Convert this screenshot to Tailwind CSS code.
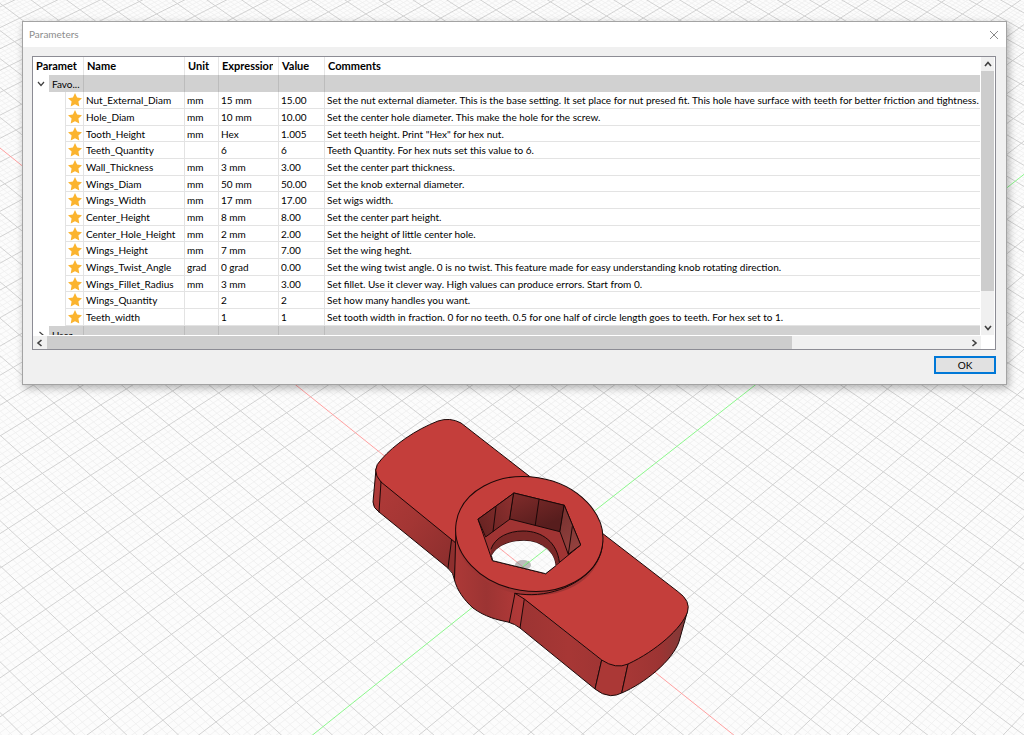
<!DOCTYPE html>
<html lang="en">
<head>
  <meta charset="UTF-8" />
  <meta name="viewport" content="width=device-width, initial-scale=1" />
  <title>Parameters</title>
  <script src="https://cdn.jsdelivr.net/npm/@tailwindcss/browser@4"></script>
</head>
<body class="bg-[#fcfcfc] font-['Lato','Noto_Sans',sans-serif] text-[10px] text-black">
  <main class="relative min-h-screen overflow-hidden">

    <!-- 3D viewport -->
    <svg class="absolute inset-0 h-full w-full" viewBox="0 0 1024 735" preserveAspectRatio="xMidYMid slice" aria-hidden="true">
      <defs>
        <linearGradient id="sideLeft" x1="373" y1="490" x2="456" y2="550" gradientUnits="userSpaceOnUse">
          <stop offset="0" stop-color="#b03a38" />
          <stop offset="0.5" stop-color="#a33634" />
          <stop offset="1" stop-color="#8e2f2e" />
        </linearGradient>
        <linearGradient id="sideRing" x1="455" y1="0" x2="518" y2="0" gradientUnits="userSpaceOnUse">
          <stop offset="0" stop-color="#ac3937" />
          <stop offset="0.5" stop-color="#9c3433" />
          <stop offset="1" stop-color="#b03938" />
        </linearGradient>
        <linearGradient id="sideRight" x1="520" y1="0" x2="601" y2="0" gradientUnits="userSpaceOnUse">
          <stop offset="0" stop-color="#9c3433" />
          <stop offset="0.6" stop-color="#a73735" />
          <stop offset="1" stop-color="#a03534" />
        </linearGradient>
        <linearGradient id="sideEnd" x1="622" y1="0" x2="687" y2="0" gradientUnits="userSpaceOnUse">
          <stop offset="0" stop-color="#a83836" />
          <stop offset="0.6" stop-color="#9c3433" />
          <stop offset="1" stop-color="#7d3b39" />
        </linearGradient>
        <linearGradient id="wallBack" x1="520" y1="495" x2="535" y2="530" gradientUnits="userSpaceOnUse">
          <stop offset="0" stop-color="#7c2a29" />
          <stop offset="1" stop-color="#571d1d" />
        </linearGradient>
        <linearGradient id="wallLeft" x1="480" y1="520" x2="513" y2="505" gradientUnits="userSpaceOnUse">
          <stop offset="0" stop-color="#6b2423" />
          <stop offset="1" stop-color="#8b2f2e" />
        </linearGradient>
        <linearGradient id="wallRight" x1="562" y1="520" x2="579" y2="545" gradientUnits="userSpaceOnUse">
          <stop offset="0" stop-color="#7d3533" />
          <stop offset="1" stop-color="#93403d" />
        </linearGradient>
        <mask id="bore" maskUnits="userSpaceOnUse" x="0" y="0" width="1024" height="735">
          <rect width="1024" height="735" fill="white" />
          <path fill="black" d="M492.700 560.700 L491.500 556 C496 546 509 540.700 524 540.700 C542 541 555 552 555.500 566 L545.700 573.700 Z" />
        </mask>
      </defs>

      <g fill="none">
        <path id="gridMinor" stroke="#efefef" stroke-width="0.8" />
        <path id="gridMajor" stroke="#d2d2d2" stroke-width="1" />
        <path d="M-20 132 L523 567 L745 744" stroke="#ffa0a0" />
        <path d="M1064 143 L523 567 L290 753" stroke="#8cf78c" />
      </g>
      <ellipse cx="523" cy="565" rx="8" ry="5" fill="#888888" fill-opacity="0.55" />
      <path d="M523 566 L529 561" stroke="#8cf78c" />

      <g mask="url(#bore)" stroke="#1c0808" stroke-width="1" stroke-linejoin="round" stroke-linecap="round">
        <!-- left wing -->
        <path fill="url(#sideLeft)" d="M376 469 L373 502 Q373 508 379 512 L447.500 567.700 Q454 573 454.500 580 L470 580 L470 500 Z" />
        <path fill="#c43e3b" d="M530 476.700 L461 423 Q450 417 438 421 C415 430 394 445 381.700 459 Q370 470 381 482 L451 539 Q456 542 457 546 L500 560 Z" />
        <path fill="none" d="M381 482 L379 512 M451.500 540 L448 568 M457 546 L454.500 577" />

        <!-- hub side and right wing -->
        <path fill="url(#sideRing)" d="M456 528 L454.500 580 C457 590 464 600 473 608 C485 617 498 620 508 622 Q515 624 520 628 L560 600 L602 540 Z" />
        <path fill="url(#sideRight)" d="M524.300 599 L520 628 L595 689 L601.700 660 Z" />
        <path fill="#ab3836" d="M601.700 660 L595 689 Q602 695 610.700 695.700 Q617 695.500 621.700 693 L628 664 Z" />
        <path fill="url(#sideEnd)" d="M628 664 L621.700 693 C645 683 672 661 679 641.700 L687 613 Z" />
        <path fill="#c43e3b" d="M602 533 L678 591.700 Q691 601 687.500 612 C682 628 656 651 628 664 Q616 669.500 601.700 660 L524.300 599 L515 593.300 Z" />
        <path fill="none" d="M515 593.300 L509.300 622.500" />

        <!-- hub top with hexagonal pocket -->
        <ellipse cx="529.300" cy="538" rx="73.600" ry="57" transform="rotate(9 529.300 538)" fill="#a03534" stroke="none" />
        <path fill="none" d="M515 593.300 C545 599 578 587 594 566 Q603 554 602.700 541" />
        <ellipse cx="529.300" cy="534" rx="74" ry="57" transform="rotate(9 529.300 534)" fill="#c43e3b" />
        <path fill="#a03433" d="M478.300 519 L514 493 L564.300 505.300 L580.700 545 L545.700 573.700 L492.700 560.700 Z" />
        <path fill="#7a2827" stroke="none" d="M491 557 C488 542 506 531 523 531 C543 531 557 543 559.300 561.700 L545.700 573.700 L492.700 560.700 Z" />
        <path fill="none" d="M491 549 C495 537 509 531 523 531 C543 531 557 543 559.300 561.700" />
        <path fill="none" d="M491.500 556 C496 546 509 540.700 524 540.700 C542 541 555 552 555.500 566" />
        <path fill="url(#wallLeft)" d="M478.300 519 L514 493 L510 519 L486 536.700 Z" />
        <path fill="url(#wallBack)" d="M514 493 L564.300 505.300 L560 531.700 L510 519 Z" />
        <path fill="url(#wallRight)" d="M564.300 505.300 L580.700 545 L568.300 554.300 L560 531.700 Z" />
        <path fill="none" d="M496 507 L493 531.500 M539 499.700 L535.300 525 M572.300 526.700 L568.300 554.300" />
      </g>
      <path fill="none" stroke="#1c0808" d="M491.500 556 L492.700 560.700 L545.700 573.700 L555.500 566" />
    </svg>

    <!-- Dialog -->
    <section class="relative mt-[21px] mr-[17px] ml-[22px] border border-[#a3a3a3] bg-[#f0f0f0] shadow-[2px_3px_8px_rgba(0,0,0,0.3)]" role="dialog" aria-labelledby="dialogTitle">
      <header class="flex h-[25px] items-center justify-between bg-white pr-1 pl-[6px]">
        <h1 id="dialogTitle" class="text-[#8c8c8c]">Parameters</h1>
        <button class="flex h-4 w-4 items-center justify-center" aria-label="Close">
          <svg class="h-[10px] w-[10px]" viewBox="0 0 10 10" fill="none" stroke="#8a8a8a"><path d="M1 1 L9 9 M9 1 L1 9" /></svg>
        </button>
      </header>

      <div class="mt-[9px] mr-[10px] ml-[9px] border border-[#8c8c94] bg-white pr-px">
        <div class="flex">
          <div class="h-[278px] min-w-0 flex-1 overflow-hidden">
            <table class="w-full table-fixed border-separate border-spacing-0 leading-[14px] whitespace-nowrap">
              <colgroup>
                <col class="w-4" />
                <col class="w-[17px]" />
                <col class="w-[18px]" />
                <col class="w-[101px]" />
                <col class="w-[34px]" />
                <col class="w-[60px]" />
                <col class="w-[46px]" />
                <col />
              </colgroup>
              <thead>
                <tr class="h-[18px] text-left text-[11px]">
                  <th colspan="3" class="overflow-hidden border-r border-[#e5e5e5] p-0 pl-[3px]"><div class="w-[41px] overflow-hidden">Parameter</div></th>
                  <th class="border-r border-[#e5e5e5] p-0 pl-[3px]">Name</th>
                  <th class="border-r border-[#e5e5e5] p-0 pl-[3px]">Unit</th>
                  <th class="overflow-hidden border-r border-[#e5e5e5] p-0 pl-[3px]"><div class="w-[51px] overflow-hidden">Expression</div></th>
                  <th class="border-r border-[#e5e5e5] p-0 pl-[3px]">Value</th>
                  <th class="p-0 pl-[3px]">Comments</th>
                </tr>
              </thead>
              <tbody id="rows"></tbody>
            </table>
          </div>

          <div class="ml-px flex w-[13px] flex-col bg-[#f0f0f0]">
            <button class="flex h-[14px] items-center justify-center" aria-label="Scroll up">
              <svg class="h-2 w-2" viewBox="0 0 8 8" fill="none" stroke="#404040" stroke-width="1.6"><path d="M1 6 L4 2.500 L7 6" /></svg>
            </button>
            <div class="flex-1"><div class="h-[88%] bg-[#cdcdcd]"></div></div>
            <button class="flex h-[14px] items-center justify-center" aria-label="Scroll down">
              <svg class="h-2 w-2" viewBox="0 0 8 8" fill="none" stroke="#404040" stroke-width="1.6"><path d="M1 2 L4 5.500 L7 2" /></svg>
            </button>
          </div>
        </div>

        <div class="mt-px mr-[13px] flex h-[13px] bg-[#f0f0f0]">
          <button class="flex w-[14px] items-center justify-center" aria-label="Scroll left">
            <svg class="h-2 w-2" viewBox="0 0 8 8" fill="none" stroke="#404040" stroke-width="1.6"><path d="M5.500 1 L2 4 L5.500 7" /></svg>
          </button>
          <div class="flex-1"><div class="h-full w-[81%] bg-[#cdcdcd]"></div></div>
          <button class="flex w-[14px] items-center justify-center" aria-label="Scroll right">
            <svg class="h-2 w-2" viewBox="0 0 8 8" fill="none" stroke="#404040" stroke-width="1.6"><path d="M2.500 1 L6 4 L2.500 7" /></svg>
          </button>
        </div>
      </div>

      <footer class="flex justify-end pt-[6px] pr-[10px] pb-[10px] pl-[9px]">
        <button class="h-[18px] w-[62px] border-2 border-[#0078d7] bg-[#e1e1e1] leading-[14px]">OK</button>
      </footer>
    </section>
  </main>

  <script>
    const parameters = [
      ["Nut_External_Diam", "mm", "15 mm", "15.00", "Set the nut external diameter. This is the base setting. It set place for nut presed fit. This hole have surface with teeth for better friction and tightness."],
      ["Hole_Diam", "mm", "10 mm", "10.00", "Set the center hole diameter. This make the hole for the screw."],
      ["Tooth_Height", "mm", "Hex", "1.005", "Set teeth height. Print \"Hex\" for hex nut."],
      ["Teeth_Quantity", "", "6", "6", "Teeth Quantity. For hex nuts set this value to 6."],
      ["Wall_Thickness", "mm", "3 mm", "3.00", "Set the center part thickness."],
      ["Wings_Diam", "mm", "50 mm", "50.00", "Set the knob external diameter."],
      ["Wings_Width", "mm", "17 mm", "17.00", "Set wigs width."],
      ["Center_Height", "mm", "8 mm", "8.00", "Set the center part height."],
      ["Center_Hole_Height", "mm", "2 mm", "2.00", "Set the height of little center hole."],
      ["Wings_Height", "mm", "7 mm", "7.00", "Set the wing heght."],
      ["Wings_Twist_Angle", "grad", "0 grad", "0.00", "Set the wing twist angle. 0 is no twist. This feature made for easy understanding knob rotating direction."],
      ["Wings_Fillet_Radius", "mm", "3 mm", "3.00", "Set fillet. Use it clever way. High values can produce errors. Start from 0."],
      ["Wings_Quantity", "", "2", "2", "Set how many handles you want."],
      ["Teeth_width", "", "1", "1", "Set tooth width in fraction. 0 for no teeth. 0.5 for one half of circle length goes to teeth. For hex set to 1."],
    ];

    const star = `<svg class="mx-auto block h-[14px] w-[14px]" viewBox="0 0 14 14" fill="#fbb42e"><path d="M7 0 L9.100 4.600 L14 5.200 L10.400 8.600 L11.300 13.600 L7 11.200 L2.700 13.600 L3.600 8.600 L0 5.200 L4.900 4.600 Z" /></svg>`;

    function groupRow(label, chevron) {
      const cell = `<td class="border-r border-[#bcbcbc] bg-[#d1d1d1] p-0"></td>`;
      return `<tr class="h-[17px]">
        <td class="p-0"><svg class="mx-auto block h-2 w-2" viewBox="0 0 8 8" fill="none" stroke="#404040" stroke-width="1.2"><path d="${chevron}" /></svg></td>
        <td colspan="2" class="border-r border-[#bcbcbc] bg-[#d1d1d1] p-0 pl-[3px]">${label}</td>
        ${cell.repeat(4)}
        <td class="bg-[#d1d1d1] p-0"></td>
      </tr>`;
    }

    function parameterRow(p) {
      const cells = p.map((text, i) => i < 4
        ? `<td class="border-r border-b border-[#e3e3e3] p-0 pl-[2px]">${text}</td>`
        : `<td class="border-b border-[#e3e3e3] p-0 pl-[2px]">${text}</td>`);
      return `<tr class="h-[17px] nth-[3n+1]:h-4">
        <td colspan="2" class="border-r border-[#e3e3e3] p-0"></td>
        <td class="border-r border-b border-[#e3e3e3] p-0">${star}</td>
        ${cells.join("")}
      </tr>`;
    }

    document.getElementById("rows").innerHTML =
      groupRow("Favo...", "M1 2 L4 5.500 L7 2") +
      parameters.map(parameterRow).join("") +
      groupRow("User...", "M2.500 1 L6 4 L2.500 7");

    // Ground plane: u runs along the red axis, v along the green one
    function project(u, v) {
      const w = 1 - 0.0075 * u - 0.00905 * v;
      return (523 + (25.2 * u - 23.34 * v) / w).toFixed(1) + " " + (567 + (20.18 * u + 18.36 * v) / w).toFixed(1);
    }

    let major = "";
    let minor = "";
    for (let i = -300; i <= 200; i++) {
      const k = i / 5;
      const line = `M${project(k, -60)}L${project(k, 40)}M${project(-60, k)}L${project(40, k)}`;
      if (i % 5 === 0) {
        if (i !== 0) major += line;
      } else {
        minor += line;
      }
    }
    document.getElementById("gridMajor").setAttribute("d", major);
    document.getElementById("gridMinor").setAttribute("d", minor);
  </script>
</body>
</html>
